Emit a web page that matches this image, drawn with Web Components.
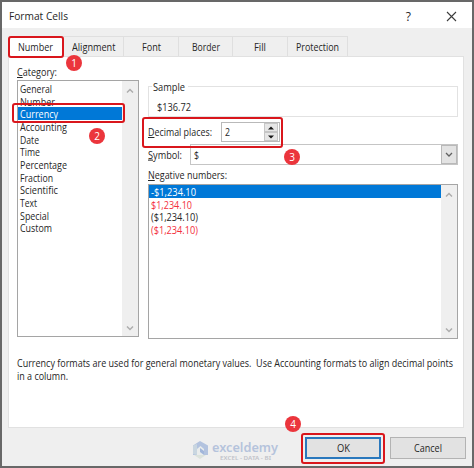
<!DOCTYPE html>
<html lang="en"><head><meta charset="utf-8"><title>Format Cells</title>
<style>html,body{margin:0;width:474px;height:468px;overflow:hidden}body{font-family:"Open Sans","Noto Sans",sans-serif;font-size:10.4px;color:#262626}</style></head><body>
<format-dialog></format-dialog>
<script>
// Text run set to an exact advance width.
class FitText extends HTMLElement{
  connectedCallback(){
    const r=this.attachShadow({mode:'open'});
    r.innerHTML='<style>:host{display:inline-block;white-space:pre;flex:none;line-height:13px;height:13px}span{display:inline-block;line-height:inherit;transform-origin:0 50%}</style><span><slot></slot></span>';
    const s=r.querySelector('span'),w=+this.getAttribute('w');
    const n=s.getBoundingClientRect().width;
    this.style.width=w+'px';s.style.marginRight=(w-n)+'px';s.style.transform='translateY(var(--lift,-1px)) scaleX('+w/n+')';
  }
}
class StepBadge extends HTMLElement{
  connectedCallback(){
    this.attachShadow({mode:'open'}).innerHTML='<style>:host{position:absolute;width:16px;height:16px;border-radius:50%;background:#eb353c;color:#fff;font-size:10px;line-height:16px;text-align:center;z-index:3}</style><slot></slot>';
  }
}
class MarkFrame extends HTMLElement{
  connectedCallback(){
    this.attachShadow({mode:'open'}).innerHTML='<style>:host{position:absolute;box-sizing:border-box;border:2px solid #d9161c;border-radius:3px;z-index:2}</style>';
  }
}
class TabStrip extends HTMLElement{
  connectedCallback(){
    const tabs=[['Number',55,35],['Alignment',60,43.5],['Font',55,19],['Border',54,28],['Fill',55,12],['Protection',60,43]];
    this.attachShadow({mode:'open'}).innerHTML='<style>:host{display:flex;height:20px;padding-left:8px;--lift:0px}div{box-sizing:border-box;border-top:1px solid #dfdfdf;border-right:1px solid #dfdfdf;display:flex;justify-content:center;align-items:center;padding-top:1px}.on{background:#fff}.on fit-text{margin-right:2px}</style>'+
    tabs.map((t,i)=>`<div class="${i?'':'on'}" style="width:${t[1]}px"><fit-text w="${t[2]}">${t[0]}</fit-text></div>`).join('');
  }
}
class ScrollRail extends HTMLElement{
  connectedCallback(){
    this.attachShadow({mode:'open'}).innerHTML='<style>:host{display:flex;flex-direction:column;justify-content:space-between;align-items:center;width:16px;background:#efefef;padding:7px 0 5px;box-sizing:border-box}svg{fill:none;stroke:#adadad;stroke-width:1.5}</style><svg width="8" height="5"><path d="M1 4.5 4 1.5 7 4.5"/></svg><svg width="8" height="5"><path d="M1 .5 4 3.5 7 .5"/></svg>';
  }
}
class ListBox extends HTMLElement{
  connectedCallback(){
    const items=JSON.parse(this.getAttribute('items')),sel=+this.getAttribute('selected');
    this.attachShadow({mode:'open'}).innerHTML='<style>:host{display:flex;box-sizing:border-box;border:1px solid #a5a5a5;background:#fff;--lift:.6px}.l{flex:1;padding-top:var(--top,1px)}.r{height:12.7px;display:flex;align-items:center;padding-left:2px}.sel{background:#0078d7;color:#fff}.red{color:#f32f3c}</style><div class="l">'+
    items.map((t,i)=>`<div class="r ${i===sel?'sel':''} ${t[2]||''}"><fit-text w="${t[1]}">${t[0]}</fit-text></div>`).join('')+'</div><scroll-rail></scroll-rail>';
  }
}
class DialogButton extends HTMLElement{
  connectedCallback(){
    this.attachShadow({mode:'open'}).innerHTML='<style>:host{display:flex;box-sizing:border-box;width:76px;height:22px;align-items:center;justify-content:center;border:1px solid #b3b3b3;background:#e2e2e2;--lift:0px}:host([primary]){border:2px solid #2a78bd}</style><slot></slot>';
  }
}
class BrandMark extends HTMLElement{
  connectedCallback(){
    this.attachShadow({mode:'open'}).innerHTML='<style>:host{display:flex;gap:3px;align-items:flex-start;padding-top:7px;--lift:0px}.n{font:600 12px/13px "Noto Sans",sans-serif;color:#b5c3dc}.s{font:600 4.5px/5px "Noto Sans",sans-serif;color:#bfc2c9;margin-top:2px}.t{display:flex;flex-direction:column;align-items:center}.n{height:13px}.s,.s fit-text{height:5px;line-height:5px}fit-text{display:block}</style><svg width="17" height="19" viewBox="0 0 17 19"><path fill="#b3c3df" d="M8 0 16 4.5V14H1V4.5z"/><path fill="#c9d6e0" d="M1 4.5 5 3v11L1 13z"/><path fill="#e9ecec" d="M5 8 8.5 5 12 8V14H5z"/><path fill="#a2b6da" d="M8 7 12 10V14L8 11z"/><path fill="#dce2dc" d="M2 14H14L8 18z"/></svg><div class="t"><div class="n"><fit-text w="66">exceldemy</fit-text></div><div class="s"><fit-text w="51">EXCEL - DATA - BI</fit-text></div></div>';
  }
}
class FormatDialog extends HTMLElement{
  connectedCallback(){
    const cats=[['General',32],['Number',35],['Currency',38],['Accounting',47],['Date',19],['Time',20],['Percentage',47],['Fraction',33],['Scientific',38],['Text',17],['Special',29],['Custom',32]];
    const neg=[['-$1,234.10',45],['$1,234.10',41,'red'],['($1,234.10)',47],['($1,234.10)',47,'red']];
    this.attachShadow({mode:'open'}).innerHTML=`<style>
:host{display:block;position:relative;box-sizing:border-box;width:474px;height:468px;padding:2px;background:#686868}
*{box-sizing:border-box}
u{text-decoration-thickness:1px;text-underline-offset:1px}
.win{height:464px;width:470px;background:#efefef;display:flex;flex-direction:column}
header{height:26px;background:#fff;display:flex;align-items:center;padding:2px 15px 0 7px;font-size:11.6px}
header .q{margin-left:auto;margin-right:35px;font-size:12px}
tab-strip{margin-top:8px;margin-left:-1px}
.panel{margin:0 8px 0 6px;height:372px;background:#fff;border:1px solid #e1e1e1;padding:9px 7px 0 8px;display:flex;flex-direction:column}
.cols{display:grid;grid-template-columns:122px 310px;gap:9px;height:273px}
.left{display:flex;flex-direction:column;--lift:0px}
.left list-box{height:257px;margin-top:1px}
.right{display:flex;flex-direction:column}
.sample{height:31px;margin-top:20px;border:1px solid #e2e2e2;display:flex;flex-direction:column;padding-left:3px;--lift:0px}
.sample .cap{background:#fff;height:13px;margin-top:-7px;width:36px;padding-left:1px}
.sample .val{margin:7px 0 0 5px;height:13px}
.dec{display:flex;align-items:center;height:20px;margin-top:5px;--lift:0px}
.inp{margin-left:9px;width:59px;height:20px;border:1px solid #b9b9b9;display:flex;justify-content:space-between;padding:0 1px 0 3px;align-items:center}
.spin{display:grid;grid-template-rows:9px 9px;width:14px}
.spin i{border:1px solid #c6c6c6;background:#e6e6e6;display:flex;align-items:center;justify-content:center}
.spin svg{fill:#161616}
.sym{display:flex;align-items:center;height:21px;margin-top:2px;--lift:.6px}
.combo{margin-left:8px;flex:1;height:21px;border:1px solid #c5c5c5;display:flex;align-items:center;justify-content:space-between;padding-left:3px}
.drop{width:16px;height:19px;border:1px solid #b9b9b9;background:#e3e3e3;display:flex;align-items:center;justify-content:center}
.drop svg{fill:none;stroke:#606060;stroke-width:1.3}
.neg{margin-top:4px;height:15px}
.right list-box{height:155px;--top:0px}
.note{margin-top:17px;display:flex;flex-direction:column;--lift:.6px}
footer{display:flex;align-items:center;padding:2px 6px 0 190px;height:36px}
footer .b{display:flex;margin-left:auto;gap:9px;margin-top:2px}
</style>
<div class="win"><header><fit-text w="59">Format Cells</fit-text><span class="q">?</span><svg width="11" height="11" fill="none" stroke="#3c3c3c" stroke-width="1.1"><path d="M1 1 10 10M10 1 1 10"/></svg></header>
<tab-strip></tab-strip>
<div class="panel"><div class="cols"><div class="left"><fit-text w="40"><u>C</u>ategory:</fit-text><list-box selected="2" items='${JSON.stringify(cats)}'></list-box></div>
<div class="right"><div class="sample"><div class="cap"><fit-text w="32">Sample</fit-text></div><div class="val"><fit-text w="34">$136.72</fit-text></div></div>
<div class="dec"><fit-text w="64"><u>D</u>ecimal places:</fit-text><div class="inp"><fit-text w="5">2</fit-text><div class="spin"><i><svg width="6" height="4"><path d="M0 3.5 3 .5 6 3.5z"/></svg></i><i><svg width="6" height="4"><path d="M0 .5 3 3.5 6 .5z"/></svg></i></div></div></div>
<div class="sym"><fit-text w="34"><u>S</u>ymbol:</fit-text><div class="combo"><fit-text w="5">$</fit-text><div class="drop"><svg width="8" height="5"><path d="M1 1 4 4 7 1"/></svg></div></div></div>
<div class="neg"><fit-text w="79"><u>N</u>egative numbers:</fit-text></div><list-box selected="0" items='${JSON.stringify(neg)}'></list-box></div></div>
<div class="note"><fit-text w="436">Currency formats are used for general monetary values.  Use Accounting formats to align decimal points</fit-text><fit-text w="51">in a column.</fit-text></div></div>
<footer><brand-mark></brand-mark><div class="b"><dialog-button primary><fit-text w="13">OK</fit-text></dialog-button><dialog-button><fit-text w="28">Cancel</fit-text></dialog-button></div></footer></div>
<mark-frame style="left:8px;top:36px;width:56px;height:22px"></mark-frame>
<mark-frame style="left:12px;top:103px;width:113px;height:20px"></mark-frame>
<mark-frame style="left:142px;top:117px;width:141px;height:31px"></mark-frame>
<mark-frame style="left:301px;top:433px;width:84px;height:31px"></mark-frame>
<step-badge style="left:66px;top:55px">1</step-badge><step-badge style="left:89px;top:128px">2</step-badge><step-badge style="left:284px;top:149px">3</step-badge><step-badge style="left:285px;top:416px">4</step-badge>`;
  }
}
for(const [n,c] of [['fit-text',FitText],['step-badge',StepBadge],['mark-frame',MarkFrame],['tab-strip',TabStrip],['scroll-rail',ScrollRail],['list-box',ListBox],['dialog-button',DialogButton],['brand-mark',BrandMark],['format-dialog',FormatDialog]])customElements.define(n,c);
</script></body></html>
